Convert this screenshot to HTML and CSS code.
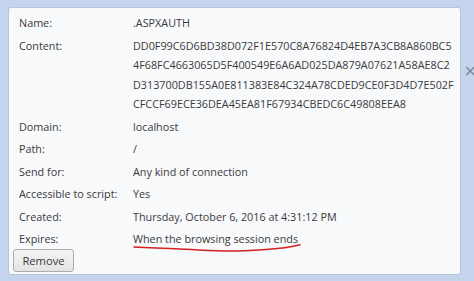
FILE: index.html
```html
<!DOCTYPE html>
<html>
<head>
<meta charset="utf-8">
<link rel="stylesheet" href="styles.css">
</head>
<body>
<div class="page">
  <div class="panel">
    <div class="details">
      <div class="label">Name:</div>
      <div class="value">.ASPXAUTH</div>
      <div class="label">Content:</div>
      <div class="value hex">DD0F99C6D6BD38D072F1E570C8A76824D4EB7A3CB8A860BC5<br>4F68FC4663065D5F400549E6A6AD025DA879A07621A58AE8C2<br>D313700DB155A0E811383E84C324A78CDED9CE0F3D4D7E502F<br>CFCCF69ECE36DEA45EA81F67934CBEDC6C49808EEA8</div>
      <div class="label">Domain:</div>
      <div class="value">localhost</div>
      <div class="label">Path:</div>
      <div class="value">/</div>
      <div class="label">Send for:</div>
      <div class="value">Any kind of connection</div>
      <div class="label">Accessible to script:</div>
      <div class="value">Yes</div>
      <div class="label">Created:</div>
      <div class="value">Thursday, October 6, 2016 at 4:31:12 PM</div>
      <div class="label">Expires:</div>
      <div class="value expires">When the browsing session ends<svg class="scribble" width="170" height="10" viewBox="0 0 170 10"><path d="M1 3 C 40 4.5, 70 6.5, 90 7 S 150 5.5, 167 0.8" fill="none" stroke="#d42020" stroke-width="1.5" stroke-linecap="round"/></svg></div>
    </div>
    <button class="remove">Remove</button>
  </div>
  <div class="close">×</div>
</div>
</body>
</html>
```
FILE: styles.css
```css
html, body {
  margin: 0;
  padding: 0;
}
body {
  background: #c4d4ec;
  font-family: "Open Sans", "Noto Sans", sans-serif;
  font-size: 10.8px;
  color: #3a3a3a;
  width: 474px;
  height: 281px;
  overflow: hidden;
}
.page {
  position: relative;
  display: flex;
  padding: 7px 13px 6px 8px;
  height: 268px;
}
.panel {
  box-sizing: border-box;
  flex: 0 0 453px;
  width: 453px;
  height: 268px;
  background: #f8f9fb;
  border: 1px solid #b7c3d6;
  border-radius: 3px;
  padding: 5px 0 0 4px;
}
.details {
  display: grid;
  grid-template-columns: 114px minmax(0, 1fr);
  row-gap: 3px;
  padding-left: 6px;
  line-height: 19.5px;
}
.value {
  white-space: nowrap;
}
.expires {
  position: relative;
}
.scribble {
  position: absolute;
  left: 0;
  top: 15px;
}
.remove {
  margin-top: 0;
  width: 61px;
  height: 23px;
  font-family: inherit;
  font-size: 11.2px;
  color: #3a3a3a;
  background: linear-gradient(#f4f4f4, #e4e4e4);
  border: 1px solid #acacac;
  border-radius: 3px;
  padding: 0;
}
.close {
  position: absolute;
  right: -3px;
  top: 61px;
  font-size: 16px;
  color: #7d879a;
  font-family: "DejaVu Sans", sans-serif;
}
```
